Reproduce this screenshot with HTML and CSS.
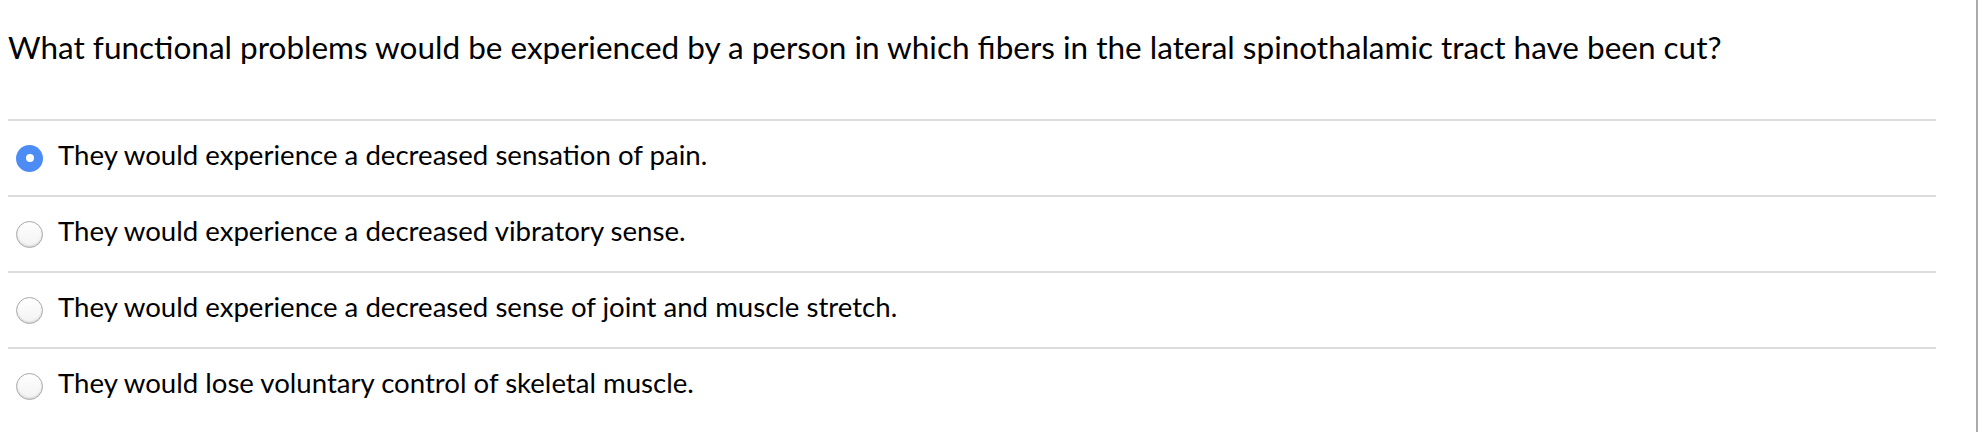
FILE: index.html
```html
<!DOCTYPE html>
<html>
<head>
<meta charset="utf-8">
<link rel="stylesheet" href="styles.css">
</head>
<body>
<div class="page">
  <div class="quiz">
    <div class="question">What functional problems would be experienced by a person in which fibers in the lateral spinothalamic tract have been cut?</div>
    <div class="answers">
      <label class="answer"><span class="radio checked"></span><span class="text">They would experience a decreased sensation of pain.</span></label>
      <label class="answer"><span class="radio"></span><span class="text">They would experience a decreased vibratory sense.</span></label>
      <label class="answer"><span class="radio"></span><span class="text">They would experience a decreased sense of joint and muscle stretch.</span></label>
      <label class="answer"><span class="radio"></span><span class="text">They would lose voluntary control of skeletal muscle.</span></label>
    </div>
  </div>
  <div class="edge"></div>
</div>
</body>
</html>
```

FILE: styles.css
```css
html, body {
  margin: 0;
  padding: 0;
  background: #fff;
}
body {
  font-family: Lato, "Open Sans", sans-serif;
  color: #000;
}
.page {
  display: flex;
  height: 432px;
}
.quiz {
  width: 1928px;
  margin-left: 8px;
}
.edge {
  width: 2px;
  background: #aaaaaa;
  margin-left: 40px;
  height: 432px;
}
.question {
  font-size: 31.5px;
  line-height: 38px;
  padding-top: 28px;
  height: 91px;
}
.answer {
  display: flex;
  align-items: center;
  height: 74px;
  border-top: 2px solid #dcdcdc;
}
.radio {
  width: 27px;
  height: 27px;
  box-sizing: border-box;
  border-radius: 50%;
  border: 1px solid #a9a9a9;
  background: linear-gradient(#ffffff, #f2f2f2);
  box-shadow: inset 0 -1px 2px rgba(0, 0, 0, 0.15);
  margin-left: 8px;
  margin-right: 15px;
  flex: none;
  position: relative;
}
.radio.checked {
  border: none;
  box-shadow: none;
  background: #4d8cf5;
}
.radio.checked::after {
  content: "";
  position: absolute;
  left: 50%;
  top: 50%;
  width: 8px;
  height: 8px;
  margin: -4px 0 0 -4px;
  border-radius: 50%;
  background: #fff;
}
.text {
  font-size: 27.6px;
  line-height: 34px;
  padding-bottom: 7px;
}
```
